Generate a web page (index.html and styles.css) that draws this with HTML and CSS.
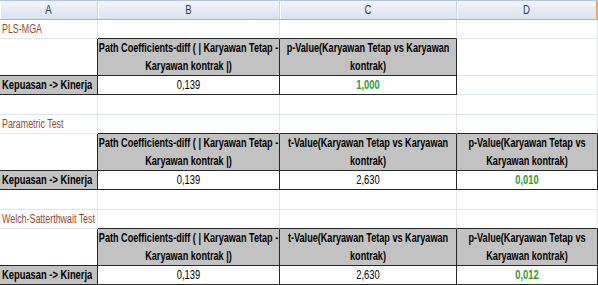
FILE: index.html
```html
<!DOCTYPE html>
<html>
<head>
<meta charset="utf-8">
<link rel="stylesheet" href="styles.css">
</head>
<body>
<div class="sheet">
  <div class="colhead">
    <div class="ch"><span class="t">A</span></div><div class="ch"><span class="t">B</span></div><div class="ch"><span class="t">C</span></div><div class="ch last"><span class="t">D</span></div>
  </div>

  <div class="row title">
    <div class="c tt"><span class="t">PLS-MGA</span></div><div class="c bt"></div><div class="c bt"></div><div class="c"></div>
  </div>
  <div class="row hdr">
    <div class="c tb"></div>
    <div class="c tb th"><span class="t">Path Coefficients-diff ( | Karyawan Tetap - Karyawan kontrak |)</span></div>
    <div class="c tb th"><span class="t">p-Value(Karyawan Tetap vs Karyawan kontrak)</span></div>
    <div class="c"></div>
  </div>
  <div class="row data">
    <div class="c tb rl"><span class="t">Kepuasan -&gt; Kinerja</span></div>
    <div class="c tb num"><span class="t">0,139</span></div>
    <div class="c tb num g"><span class="t">1,000</span></div>
    <div class="c"></div>
  </div>
  <div class="row empty">
    <div class="c"></div><div class="c"></div><div class="c"></div><div class="c"></div>
  </div>

  <div class="row title">
    <div class="c tt"><span class="t">Parametric Test</span></div><div class="c bt"></div><div class="c bt"></div><div class="c bt"></div>
  </div>
  <div class="row hdr">
    <div class="c tb"></div>
    <div class="c tb th"><span class="t">Path Coefficients-diff ( | Karyawan Tetap - Karyawan kontrak |)</span></div>
    <div class="c tb th"><span class="t">t-Value(Karyawan Tetap vs Karyawan kontrak)</span></div>
    <div class="c tb th"><span class="t">p-Value(Karyawan Tetap vs Karyawan kontrak)</span></div>
  </div>
  <div class="row data">
    <div class="c tb rl"><span class="t">Kepuasan -&gt; Kinerja</span></div>
    <div class="c tb num"><span class="t">0,139</span></div>
    <div class="c tb num"><span class="t">2,630</span></div>
    <div class="c tb num g"><span class="t">0,010</span></div>
  </div>
  <div class="row empty">
    <div class="c"></div><div class="c"></div><div class="c"></div><div class="c"></div>
  </div>

  <div class="row title">
    <div class="c tt"><span class="t">Welch-Satterthwait Test</span></div><div class="c bt"></div><div class="c bt"></div><div class="c bt"></div>
  </div>
  <div class="row hdr">
    <div class="c tb"></div>
    <div class="c tb th"><span class="t">Path Coefficients-diff ( | Karyawan Tetap - Karyawan kontrak |)</span></div>
    <div class="c tb th"><span class="t">t-Value(Karyawan Tetap vs Karyawan kontrak)</span></div>
    <div class="c tb th"><span class="t">p-Value(Karyawan Tetap vs Karyawan kontrak)</span></div>
  </div>
  <div class="row data">
    <div class="c tb rl"><span class="t">Kepuasan -&gt; Kinerja</span></div>
    <div class="c tb num"><span class="t">0,139</span></div>
    <div class="c tb num"><span class="t">2,630</span></div>
    <div class="c tb num g"><span class="t">0,012</span></div>
  </div>
</div>
</body>
</html>
```
FILE: styles.css
```css
html, body {
  margin: 0;
  padding: 0;
  background: #ffffff;
}
.sheet {
  --sx: 0.72;
  width: 598px;
  height: 285px;
  overflow: hidden;
  font-family: "Liberation Sans", Arial, sans-serif;
  color: #000;
}
/* narrow (Arial Narrow-like) text: the block is laid out wider and squeezed back */
.t {
  display: block;
  width: calc(100% / var(--sx));
  transform: scaleX(var(--sx));
  transform-origin: 0 0;
}
.colhead, .row {
  display: grid;
  grid-template-columns: 98px 182px 177px 141px;
}
.colhead {
  height: 20px;
  box-sizing: border-box;
  border-top: 1px solid #b5c6da;
  border-bottom: 1px solid #9eb6ce;
  background: linear-gradient(#f3f6fb, #e3eaf4 55%, #d9e3ef);
}
.ch {
  --sx: 0.8;
  border-right: 1px solid #c5d3e3;
  box-shadow: inset 1px 0 0 #ffffff;
  text-align: center;
  font-size: 12px;
  line-height: 18px;
  color: #2a3f58;
}
.ch.last {
  border-right: 2px solid #f2a64a;
}
.row.title { height: 19px; }
.row.hdr { height: 37px; }
.row.data { height: 19px; }
.row.empty { height: 20px; }
.c {
  box-sizing: border-box;
  border-right: 1px solid #dfe5ee;
  border-bottom: 1px solid #dfe5ee;
  overflow: hidden;
}
.tt {
  --sx: 0.74;
  font-size: 12px;
  line-height: 19px;
  padding-left: 2px;
  color: #9a4a2c;
  white-space: nowrap;
}
.bt {
  border-bottom: 1px solid #262626;
}
.tb {
  border-right: 1px solid #262626;
  border-bottom: 1px solid #262626;
}
.th {
  --sx: 0.7;
  background: #c2c2c2;
  font-weight: bold;
  font-size: 13px;
  line-height: 18px;
  text-align: center;
  padding: 0;
}
.rl {
  background: #c2c2c2;
  font-weight: bold;
  font-size: 13px;
  line-height: 18px;
  padding-left: 2px;
  white-space: nowrap;
}
.num {
  font-size: 13px;
  line-height: 18px;
  text-align: center;
}
.num.g {
  color: #269e2b;
  font-weight: bold;
}
```
